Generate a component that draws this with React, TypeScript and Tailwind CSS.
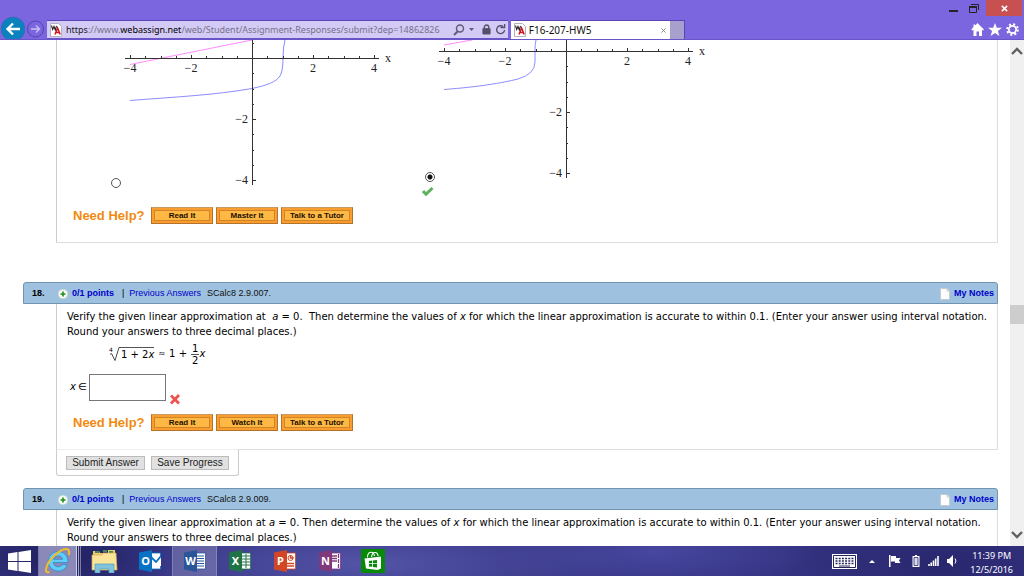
import type { ReactNode } from 'react';

const sans = "font-['Liberation_Sans',Arial,sans-serif]";
const verdana = "font-['DejaVu_Sans',Verdana,sans-serif]";
const segoe = "font-['Noto_Sans','Segoe_UI',sans-serif]";

function SiteIcon() {
  return (
    <svg viewBox="0 0 12 14" className="h-[14px] w-3 shrink-0" aria-hidden="true">
      <path d="M.5.5h8l3 3v10H.5z" fill="#fff" stroke="#b5b0bd" />
      <path d="M1.500 2.500l1.200 4L4 3.500l1.300 3.500L6.500 3" fill="none" stroke="#222" strokeWidth="1.1" />
      <path d="M5 11.500L7.600 5l2.600 6.500M6 9.500h3.200" fill="none" stroke="#d0141c" strokeWidth="1.5" />
    </svg>
  );
}

function BrowserChrome() {
  return (
    <header className={`flex h-10 shrink-0 flex-col border-b border-[#6a55c8] bg-[#7b66e0] ${segoe}`}>
      <div className="flex h-4 justify-end pr-0.5">
        <button aria-label="Minimize" className="flex w-4 items-end justify-center pb-1">
          <span className="h-0.5 w-[9px] bg-[#242424]" />
        </button>
        <button aria-label="Restore" className="flex w-[25px] items-center justify-center">
          <svg viewBox="0 0 10 9" className="h-[9px] w-[10px]" fill="none" stroke="#242424">
            <path d="M2 .5h7.5V6" />
            <path d="M.5 3v5.5h7V3" />
            <path d="M0 3h8" strokeWidth="2" />
          </svg>
        </button>
        <button aria-label="Close" className="flex w-9 items-center justify-center bg-[#c75050]">
          <svg viewBox="0 0 8 8" className="size-[7px]" stroke="#fff" strokeWidth="1.7">
            <path d="M1 1l6 6M7 1L1 7" />
          </svg>
        </button>
      </div>
      <div className="flex h-[23px] items-end">
        <button aria-label="Back" className="ml-px h-[23px] w-6 overflow-hidden">
          <svg viewBox="0 0 24 23" className="h-[23px] w-6">
            <circle cx="12" cy="13" r="12" fill="#0a82bd" stroke="#4a5fb5" strokeWidth="0.6" />
            <path d="M19 13H7M12 7.5L6.5 13l5.500 5.500" fill="none" stroke="#fff" strokeWidth="2.4" />
          </svg>
        </button>
        <button aria-label="Forward" className="ml-0.5 h-5 w-[17px]">
          <svg viewBox="0 0 17 20" className="h-5 w-[17px]" fill="none">
            <circle cx="8.500" cy="10" r="8" stroke="#5742ab" />
            <path d="M4 10h8M9 6.500l3.500 3.500L9 13.500" stroke="#c9c0f5" strokeWidth="1.4" />
          </svg>
        </button>
        <div className="ml-[3px] flex h-[19px] w-[45%] items-center gap-1 border-y border-t-[#5a45b5] border-b-[#6a55c8] bg-[#d3caf5] pl-[3px]">
          <SiteIcon />
          <div
            role="textbox"
            aria-label="Address"
            className="min-w-0 flex-1 overflow-hidden text-[9px] leading-4 whitespace-nowrap text-[#77728c]"
          >
            <span className="text-[#222]">https</span>://www.<span className="text-black">webassign.net</span>/web/Student/Assignment-Responses/submit?dep=14862826
          </div>
          <div className="flex shrink-0 items-center gap-1 pr-0.5">
            <button aria-label="Search">
              <svg viewBox="0 0 12 12" className="size-3" fill="none" stroke="#625b78" strokeWidth="1.500">
                <circle cx="7" cy="4.500" r="3.500" />
                <path d="M4.500 7.500L1 11" strokeWidth="2" />
              </svg>
            </button>
            <svg viewBox="0 0 5 3" className="h-[3px] w-[5px]" aria-hidden="true"><path d="M0 0h5L2.500 3z" fill="#625b78" /></svg>
            <svg viewBox="0 0 10 12" className="ml-1 h-[11px] w-[9px]" aria-hidden="true">
              <path d="M1 5h8v6H1z" fill="#55506a" stroke="#55506a" />
              <path d="M2.500 5V3.500a2.500 2.500 0 015 0V5" fill="none" stroke="#55506a" strokeWidth="1.500" />
            </svg>
            <button aria-label="Refresh">
              <svg viewBox="0 0 12 12" className="size-[11px]" fill="none" stroke="#55506a" strokeWidth="1.500">
                <path d="M9 3a4.300 4.300 0 101.400 3.500" />
                <path d="M6 4h4.500V0" />
              </svg>
            </button>
          </div>
        </div>
        <div className="ml-[3px] flex h-[19px] w-[159px] items-center gap-[3px] border-t border-[#5a45b5] bg-white pr-1 pl-[3px]">
          <SiteIcon />
          <span className="flex-1 text-[10px] leading-4 text-[#111]">F16-207-HW5</span>
          <button aria-label="Close tab">
            <svg viewBox="0 0 6 6" className="size-[5px]" stroke="#777"><path d="M.5.500l5 5M5.500.500l-5 5" /></svg>
          </button>
        </div>
        <button aria-label="New tab" className="h-[19px] w-[15px] border-t border-r border-[#5a45b5] bg-[#a79fce]" />
        <div className="ml-auto flex h-[19px] items-center gap-1 pr-[5px]">
          <button aria-label="Home">
            <svg viewBox="0 0 13 13" className="size-[13px]" fill="#fff">
              <path d="M6.500 0L13 6.500l-1.200 1L11 6.800V13H8V8.500H5.500V13h-3V6.800l-1 .8L.3 6.500 2.500 4V1.500h1.700v1z" />
            </svg>
          </button>
          <button aria-label="Favorites">
            <svg viewBox="0 0 14 13" className="h-[13px] w-[14px]" fill="#fff">
              <path d="M7 0l1.800 4.800H14L9.900 8l1.500 5L7 10l-4.400 3 1.500-5L0 4.800h5.200z" />
            </svg>
          </button>
          <button aria-label="Tools">
            <svg viewBox="0 0 14 14" className="size-[13px]" fill="none" stroke="#fff">
              <circle cx="7" cy="7" r="3.900" strokeWidth="1.900" />
              <circle cx="7" cy="7" r="5.700" strokeWidth="2.200" strokeDasharray="2.238 2.238" />
            </svg>
          </button>
        </div>
      </div>
    </header>
  );
}

type PlotProps = {
  cx: number;
  cy: number;
  height: number;
  blue: string;
  pink: string;
  title: string;
};

const UNIT = 30.5;
const halves = Array.from({ length: 17 }, (_, i) => (i - 8) / 2);

function Plot({ cx, cy, height, blue, pink, title }: PlotProps) {
  return (
    <svg width="275" height={height} className="block shrink-0" role="img" aria-label={title}>
      <g fill="none" strokeWidth="1">
        <path d={pink} stroke="#ff8cff" />
        <path d={blue} stroke="#8c8cff" />
      </g>
      <g stroke="#333" strokeWidth="1">
        <path d={`M${cx - 127} ${cy + 0.5}H${cx + 127}M${cx + 0.5} 0V${cy + 127}`} />
        {halves.map((n) => (
          <path key={n} d={`M${Math.round(cx + n * UNIT) + 0.5} ${cy}v${n % 2 === 0 ? -3 : -2}`} />
        ))}
        {halves.filter((n) => n !== 0).map((n) => (
          <path key={n} d={`M${cx} ${Math.round(cy - n * UNIT) + 0.5}h${n % 2 === 0 ? 4 : 2}`} />
        ))}
      </g>
      <g fill="#222" fontSize="12" fontFamily="'Liberation Serif', serif">
        {[-4, -2, 2, 4].map((n) => (
          <text key={n} x={cx + n * UNIT} y={cy + 14} textAnchor="middle">
            {n < 0 ? `−${-n}` : n}
          </text>
        ))}
        {[2, 4].map((n) => (
          <text key={n} x={cx - 4} y={cy + n * UNIT + 4} textAnchor="end">{`−${n}`}</text>
        ))}
        <text x={cx + 136} y={cy + 4} textAnchor="middle">x</text>
      </g>
    </svg>
  );
}

function Radio({ checked, label }: { checked?: boolean; label: string }) {
  return (
    <input
      type="radio"
      name="graph"
      aria-label={label}
      defaultChecked={checked}
      className="block size-[10px] appearance-none rounded-full border border-[#555] bg-white checked:bg-[radial-gradient(circle,#111_0_2px,#fff_3px)]"
    />
  );
}

function HelpRow({ items }: { items: { text: string; wide?: boolean }[] }) {
  return (
    <div className={`flex items-center ${sans}`}>
      <span className="w-[78px] text-[13px] leading-4 font-bold text-[#f08a10]">Need Help?</span>
      <div className="flex gap-[3px]">
        {items.map((item) => (
          <button
            key={item.text}
            className={`${item.wide ? 'w-[72px]' : 'w-[62px]'} h-[17px] border border-[#b5722a] border-t-[#c99a62] bg-[#fb9c2e] p-0.5 text-[8px] font-bold whitespace-nowrap text-[#1c1000]`}
          >
            <span className="flex h-full items-center justify-center border border-[#d08428] bg-[#ffb843] leading-none">
              {item.text}
            </span>
          </button>
        ))}
      </div>
    </div>
  );
}

function QuestionHeader({ number, source }: { number: number; source: string }) {
  return (
    <div className={`flex h-[22px] items-center rounded-t-[3px] border border-[#7195b0] bg-[#9dc1df] pt-px pr-[3px] pl-2 text-[9px] ${sans}`}>
      <span className="w-[26px] font-bold text-black">{number}.</span>
      <svg viewBox="0 0 10 10" className="size-[10px]" aria-hidden="true">
        <circle cx="5" cy="5" r="4.800" fill="#f4faef" stroke="#bcc9c4" strokeWidth="0.5" />
        <path d="M5 2.500v5M2.500 5h5" stroke="#218c21" strokeWidth="1.600" />
      </svg>
      <a href="#points" className="ml-1 font-bold text-[#0000cc]">0/1 points</a>
      <span className="ml-2 text-black">|</span>
      <a href="#previous" className="ml-[5px] text-[#0000cc]">Previous Answers</a>
      <span className="ml-1.5 text-[#111]">{source}</span>
      <a href="#notes" className="ml-auto flex items-center gap-1 font-bold text-[#0000cc]">
        <svg viewBox="0 0 10 12" className="h-3 w-[10px]" aria-hidden="true">
          <path d="M.5.500h6.500l2.500 2.500v8.500h-9z" fill="#fdfdfd" stroke="#c4ccd2" />
          <path d="M7 .500V3h2.500" fill="none" stroke="#c4ccd2" />
        </svg>
        My Notes
      </a>
    </div>
  );
}

function Prompt({ wide }: { wide?: boolean }) {
  const gap = wide ? '\u00a0 ' : ' ';
  return (
    <p className={`text-[10px] leading-[15px] text-black ${verdana}`}>
      Verify the given linear approximation at{gap}<i>a</i> = 0.{gap}Then determine the values of <i>x</i> for which the
      linear approximation is accurate to within 0.1. (Enter your answer using interval notation.
      <br />
      Round your answers to three decimal places.)
    </p>
  );
}

function Formula() {
  return (
    <div className={`ml-[42px] flex h-6 items-center text-[10px] leading-3 ${verdana}`}>
      <svg viewBox="0 0 12 16" className="h-4 w-3" aria-hidden="true">
        <text x="0" y="6" fontSize="6" fontFamily="DejaVu Sans">4</text>
        <path d="M1 8.500l1.500-1L6 14.500 10 1.500h2" fill="none" stroke="#333" strokeWidth="0.9" />
      </svg>
      <span className="border-t border-[#555] pt-px">1 + 2<i>x</i></span>
      <span className="mx-1 text-[8px]">≈</span>
      <span>1 +</span>
      <span className="ml-1 flex flex-col text-center leading-[11px]">
        <span className="border-b border-[#555] px-px">1</span>
        <span>2</span>
      </span>
      <i>x</i>
    </div>
  );
}

function Content() {
  return (
    <main className="min-w-0 flex-1 overflow-hidden bg-white pr-3 pl-[23px]">
      <section className="ml-[33px] h-[203px] border-x border-b border-[#ddd] border-l-[#ccc]">
        <div className="flex h-[167px] pl-[54px]">
          <div className="flex w-[314px]">
            <div className="w-[10px] pt-[138px]"><Radio label="First graph" /></div>
            <Plot
              cx={131}
              cy={18}
              height={150}
              title="Graph with the vertical segment right of the origin"
              pink="M9 24.500L131 0"
              blue="M9 60.500C54 57 94 55 131 48.500C147 45 155 42 159 36Q162 31 162 18Q162 7 164 0"
            />
          </div>
          <div className="flex">
            <div className="flex w-[10px] flex-col gap-1 pt-[132px]">
              <Radio checked label="Second graph" />
              <svg viewBox="0 0 12 10" className="-ml-[3px] h-[10px] w-3" role="img" aria-label="Correct">
                <path d="M1 5l3 3.200L10.500 2" fill="none" stroke="#5db35d" strokeWidth="3" />
              </svg>
            </div>
            <Plot
              cx={131}
              cy={11}
              height={150}
              title="Graph with the vertical segment left of the origin"
              pink="M9 5L37 0"
              blue="M9 49.500C43 47 67 43 83 39Q100 34 100 22V10Q100 4 101 0"
            />
          </div>
        </div>
        <div className="pl-4">
          <HelpRow items={[{ text: 'Read It' }, { text: 'Master It' }, { text: 'Talk to a Tutor', wide: true }]} />
        </div>
      </section>

      <div className="mt-[39px]"><QuestionHeader number={18} source="SCalc8 2.9.007." /></div>
      <section className="ml-[33px]">
        <div className="h-[146px] border-x border-b border-[#ddd] border-l-[#ccc] pt-[5px] pl-[10px]">
          <Prompt wide />
          <div className="mt-[3px]"><Formula /></div>
          <div className="mt-2 flex pl-[3px]">
            <label htmlFor="answer" className={`w-[19px] pt-1.5 text-[10px] leading-[14px] whitespace-nowrap ${verdana}`}>
              <i>x</i>&thinsp;∈
            </label>
            <input id="answer" className="h-[27px] w-[77px] border border-[#777] bg-white px-1 text-[10px]" />
            <svg viewBox="0 0 12 12" className="ml-[3px] size-3 translate-y-1 self-end" role="img" aria-label="Incorrect">
              <path d="M2 2.500l8 8M10 2l-8 8.500" stroke="#f0524f" strokeWidth="2.800" />
            </svg>
          </div>
          <div className="mt-[13px] pl-1.5">
            <HelpRow items={[{ text: 'Read It' }, { text: 'Watch It' }, { text: 'Talk to a Tutor', wide: true }]} />
          </div>
        </div>
        <div className={`-mt-px flex h-[27px] w-[183px] items-center gap-1.5 rounded-b-[3px] border border-[#ccc] border-t-[#eee] bg-white pl-[9px] text-[10px] text-[#222] ${sans}`}>
          <button className="h-[14px] w-[79px] border border-[#bbb] bg-[#e1e1e1] leading-3 whitespace-nowrap">Submit Answer</button>
          <button className="h-[14px] w-[78px] border border-[#bbb] bg-[#e1e1e1] leading-3 whitespace-nowrap">Save Progress</button>
        </div>
      </section>

      <div className="mt-3"><QuestionHeader number={19} source="SCalc8 2.9.009." /></div>
      <section className="ml-[33px] h-40 border-x border-[#ddd] border-l-[#ccc] pt-[5px] pl-[10px]">
        <Prompt />
      </section>
    </main>
  );
}

function Scrollbar() {
  return (
    <div className="flex w-[14px] shrink-0 flex-col items-center bg-[#f0f0f0]">
      <svg viewBox="0 0 12 8" className="mt-[7px] h-2 w-3" aria-hidden="true"><path d="M1 7l5-5 5 5" fill="none" stroke="#606060" strokeWidth="2.400" /></svg>
      <div className="mt-[250px] h-[19px] w-full bg-[#cdcdcd]" />
      <svg viewBox="0 0 12 8" className="mt-auto mb-[7px] h-2 w-3" aria-hidden="true"><path d="M1 1l5 5 5-5" fill="none" stroke="#606060" strokeWidth="2.400" /></svg>
    </div>
  );
}

function OfficeIcon({ letter, color, sheet }: { letter: string; color: string; sheet: ReactNode }) {
  return (
    <svg viewBox="0 0 22 22" className="h-[22px] w-[22px]" aria-hidden="true">
      <path d="M12 3h9.500v16H12z" fill="#fff" stroke={color} strokeWidth="0.8" />
      {sheet}
      <path d="M0 2.500L13 0v22L0 19.500z" fill={color} />
      <text x="6.500" y="15" textAnchor="middle" fill="#fff" fontSize="11" fontWeight="700" fontFamily="Noto Sans">{letter}</text>
    </svg>
  );
}

function Task({ label, active, children }: { label: string; active?: boolean; children: ReactNode }) {
  return (
    <button
      aria-label={label}
      className={`flex h-full w-[45px] items-center justify-center ${active ? 'border-x border-white/20 bg-white/20' : ''}`}
    >
      {children}
    </button>
  );
}

function Taskbar() {
  return (
    <footer className="flex h-[30px] shrink-0 items-center bg-[#343382] bg-[radial-gradient(ellipse_120px_40px_at_6%_40%,#20205f_0%,transparent_100%),radial-gradient(ellipse_260px_50px_at_36%_60%,#5454a8_0%,transparent_100%),radial-gradient(ellipse_160px_40px_at_64%_20%,#4747a0_0%,transparent_100%),radial-gradient(ellipse_160px_60px_at_92%_60%,#29276d_0%,transparent_100%)]">
      <button aria-label="Start" className="flex w-[38px] justify-center">
        <svg viewBox="0 0 23 23" className="size-[23px]" fill="#fff"><path d="M0 3.500L9.500 2v9H0zM10.500 2L23 0v11H10.500zM0 12h9.500v9L0 19.500zM10.500 12H23v11l-12.500-2z" /></svg>
      </button>
      <button aria-label="Internet Explorer" className="flex h-full w-[44px] items-center border-l border-white/40">
        <span className="flex h-full w-[38px] items-center justify-center border-r border-white/60 bg-[#8b89b8]">
          <svg viewBox="0 0 26 26" className="size-[26px]">
            <path d="M13 3.500a9.800 9.800 0 109.300 13.200h-5.100c-2.200 3.600-8.600 2.600-8.900-2.200h14.600C23.300 8 19 3.500 13 3.500zM8.500 11.300c.8-4.600 8.600-4.600 9.200 0z" fill="#62cdf8" stroke="#228bc8" strokeWidth="0.7" />
            <path d="M4.500 24C-2 26.500 1 15 10 7S26-1 23.800 7" fill="none" stroke="#f5bd24" strokeWidth="2" />
          </svg>
        </span>
        <span className="ml-px h-full w-px bg-white/60" />
        <span className="ml-px h-full w-px bg-white/40" />
      </button>
      <Task label="File Explorer">
        <svg viewBox="0 0 27 24" className="h-6 w-[27px]">
          <path d="M2 2h6l1 2h8V1h7v20H2z" fill="#eccb70" />
          <path d="M4 3h4M12 2h4M18 3h4" stroke="#488c53" strokeWidth="2" />
          <path d="M1 6h10l1-2h13l1 17H1z" fill="#fae49a" stroke="#d6ad4e" strokeWidth="0.7" />
          <path d="M4 24v-9h19v9h-5v-4H9v4z" fill="#80c3dd" stroke="#4f9fbf" strokeWidth="0.7" />
        </svg>
      </Task>
      <Task label="Outlook">
        <OfficeIcon letter="O" color="#0872c5" sheet={<g><path d="M12 6h10v10H12z" fill="#fff" /><path d="M12 7l5 5 5-6" fill="none" stroke="#0872c5" strokeWidth="1.800" /></g>} />
      </Task>
      <Task label="Word" active>
        <OfficeIcon letter="W" color="#2a5699" sheet={<path d="M13 6h7M13 8.500h7M13 11h7M13 13.500h7M13 16h7" stroke="#2a5699" />} />
      </Task>
      <Task label="Excel">
        <OfficeIcon letter="X" color="#207346" sheet={<path d="M13 6h8M13 9h8M13 12h8M13 15h8M17 4v14" stroke="#207346" />} />
      </Task>
      <Task label="PowerPoint">
        <OfficeIcon letter="P" color="#d24625" sheet={<g fill="none" stroke="#d24625"><circle cx="16.500" cy="8" r="2.500" /><path d="M16.500 5v3h3M13 13.500h7M13 16h7" strokeWidth="1.300" /></g>} />
      </Task>
      <Task label="OneNote">
        <OfficeIcon letter="N" color="#80397b" sheet={<path d="M13 6h5M13 8.500h5M13 11h5M19.500 4v4M19.500 9v4M19.500 14v4" stroke="#80397b" strokeWidth="1.300" />} />
      </Task>
      <Task label="Store">
        <svg viewBox="0 0 24 24" className="-ml-1 size-6">
          <path d="M0 0h24v24H0z" fill="#078a07" />
          <path d="M3.500 9.500L20 7.500v12L16.500 21 5 19.500z" fill="#fff" />
          <path d="M6.500 8.500c0-6.500 6-7 7-1.500M10.500 8c1-6 6.500-5.500 6.500-1" fill="none" stroke="#fff" strokeWidth="1.100" />
          <path d="M8 12l3-.4v2.700H8zM11.800 11.500l4.200-.6v3.400h-4.200zM8 15h3v2.800l-3-.4zM11.800 15H16v3.400l-4.200-.5z" fill="#078a07" />
        </svg>
      </Task>
      <div className="ml-auto flex items-center pr-[11px]">
        <button aria-label="Touch keyboard">
          <svg viewBox="0 0 25 15" className="h-[15px] w-[25px]">
            <path d="M0 0h25v15H0z" fill="#fff" />
            <path d="M1.500 1.500h22v12h-22z" fill="none" stroke="#24245a" />
            <path d="M3.500 4.500h18M3.500 7h18M3.500 9.500h18" stroke="#24245a" strokeWidth="1.500" strokeDasharray="2 1.200" />
            <path d="M7 12h11" stroke="#24245a" />
          </svg>
        </button>
        <button aria-label="Show hidden icons" className="ml-3">
          <svg viewBox="0 0 6 3" className="h-[3px] w-1.5"><path d="M0 3l3-3 3 3z" fill="#fff" /></svg>
        </button>
        <svg viewBox="0 0 12 12" className="ml-[14px] size-3" fill="#fff" aria-hidden="true"><path d="M0 0h1.500v12H0zM2 1h5v2h4.500L10 5.500 11.500 8H6V6.500H2z" /></svg>
        <svg viewBox="0 0 8 12" className="ml-[11px] h-3 w-2" aria-hidden="true"><path d="M3 0h2v1h2.500v11h-7V1H3z" fill="#fff" /><path d="M2 2.500h4v8H2z" fill="#d8d8ee" stroke="#2c2b72" strokeWidth="0.8" /></svg>
        <svg viewBox="0 0 11 10" className="ml-2 h-[10px] w-[11px]" stroke="#fff" strokeWidth="1.600" aria-hidden="true"><path d="M1 10V8M3.200 10V6.500M5.500 10V4.500M7.700 10V2.500M10 10V0" /></svg>
        <svg viewBox="0 0 11 12" className="ml-2 h-3 w-[11px]" aria-hidden="true"><path d="M0 4h2l4-4v12L2 8H0z" fill="#fff" /><path d="M8 3.500q2 2.500 0 5" fill="none" stroke="#fff" /></svg>
        <time className={`ml-3 pt-[3px] text-center text-[9px] leading-[14px] text-white ${segoe}`}>
          11:39 PM<br />12/5/2016
        </time>
      </div>
    </footer>
  );
}

export default function App() {
  return (
    <div className="flex h-screen flex-col overflow-hidden bg-white">
      <BrowserChrome />
      <div className="flex min-h-0 flex-1">
        <Content />
        <Scrollbar />
      </div>
      <Taskbar />
    </div>
  );
}
